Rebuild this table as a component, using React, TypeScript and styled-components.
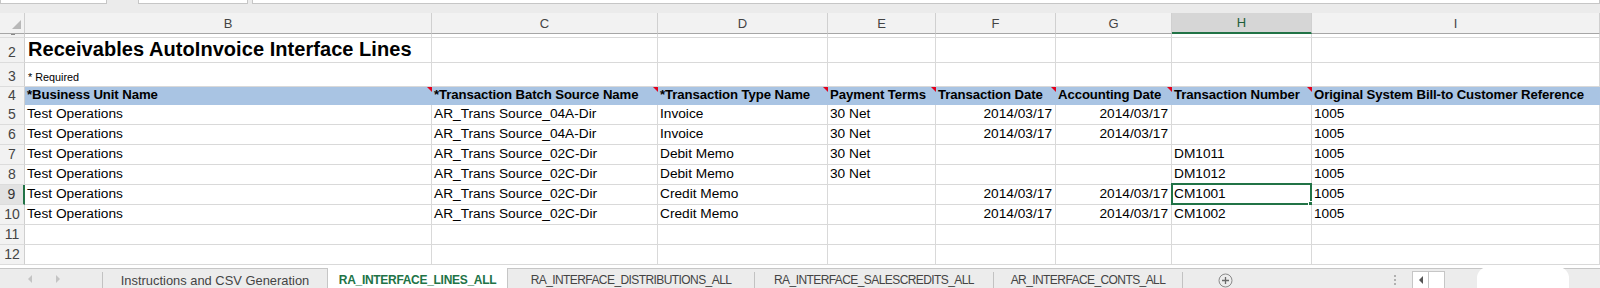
import styled, { createGlobalStyle } from "styled-components";

const GlobalStyle = createGlobalStyle`
  html, body {
    margin: 0;
    padding: 0;
    background: #ffffff;
  }
  body {
    width: 1600px;
    height: 288px;
    overflow: hidden;
    font-family: "Liberation Sans", Arial, sans-serif;
    color: #000;
  }
`;

const COLS = "25px 407px 226px 170px 108px 120px 116px 140px 288px";
const GREEN = "#217346";
const GRID = "#d9d9d9";
const FILL = "#a9c4e3";

const Page = styled.div`
  width: 1600px;
  height: 288px;
  display: flex;
  flex-direction: column;
  overflow: hidden;
`;

const TopStrip = styled.div`
  height: 13px;
  flex: none;
  display: flex;
  gap: 4px;
  background: #ebebeb;
  box-sizing: border-box;
`;

const TopBox = styled.div<{ $w?: number; $gapLeft?: number }>`
  height: 4px;
  background: #fff;
  border: 1px solid #c6c6c6;
  border-top: none;
  box-sizing: border-box;
  ${(p) => (p.$w ? `width: ${p.$w}px; flex: none;` : "flex: 1;")}
  margin-left: ${(p) => p.$gapLeft ?? 0}px;
`;

const Row = styled.div<{ $h: number }>`
  display: grid;
  grid-template-columns: ${COLS};
  height: ${(p) => p.$h}px;
  flex: none;
`;

const Corner = styled.div`
  background: #f2f2f2;
  border-right: 1px solid #cfcfcf;
  border-bottom: 1px solid #a6a6a6;
  box-sizing: border-box;
  display: flex;
  align-items: flex-end;
  justify-content: flex-end;
  padding: 0 3px 4px 0;

  &::before {
    content: "";
    width: 0;
    height: 0;
    border-left: 9px solid transparent;
    border-bottom: 9px solid #b8b8b8;
  }
`;

const ColHead = styled.div<{ $sel?: boolean }>`
  background: ${(p) => (p.$sel ? "#d6d6d6" : "#f2f2f2")};
  border-right: 1px solid #d0d0d0;
  border-bottom: ${(p) => (p.$sel ? `2px solid ${GREEN}` : "1px solid #a6a6a6")};
  box-sizing: border-box;
  display: flex;
  align-items: center;
  justify-content: center;
  font-size: 13px;
  color: ${(p) => (p.$sel ? "#1e5e3a" : "#444")};
`;

const RowHead = styled.div<{ $sel?: boolean; $stub?: boolean }>`
  background: ${(p) => (p.$sel ? "#e2e2e2" : "#f2f2f2")};
  border-right: ${(p) => (p.$sel ? `2px solid ${GREEN}` : "1px solid #cfcfcf")};
  border-bottom: 1px solid #dcdcdc;
  box-sizing: border-box;
  display: flex;
  align-items: flex-end;
  justify-content: center;
  padding-bottom: 2px;
  font-size: 14px;
  line-height: 16px;
  color: ${(p) => (p.$sel ? "#333" : "#444")};
  overflow: hidden;

  ${(p) =>
    p.$stub &&
    `
    align-items: flex-start;
    padding: 0 0 0 1px;
    &::before {
      content: "";
      width: 4px;
      height: 1px;
      background: #888;
    }
  `}
`;

type Align = "left" | "right";

const Cell = styled.div<{ $align?: Align; $fill?: boolean; $bold?: boolean; $note?: boolean; $size?: number }>`
  position: relative;
  box-sizing: border-box;
  border-right: 1px solid ${(p) => (p.$fill ? FILL : GRID)};
  border-bottom: 1px solid ${GRID};
  background: ${(p) => (p.$fill ? FILL : "#fff")};
  display: flex;
  align-items: flex-end;
  justify-content: ${(p) => (p.$align === "right" ? "flex-end" : "flex-start")};
  padding: 0 3px 2px 2px;
  white-space: nowrap;
  font-size: ${(p) => p.$size ?? 13.7}px;
  font-weight: ${(p) => (p.$bold ? 700 : 400)};
  line-height: 16px;
  letter-spacing: ${(p) => (p.$bold ? "-0.1px" : "0")};

  ${(p) =>
    p.$note &&
    `
    &::after {
      content: "";
      position: absolute;
      top: 0;
      right: -1px;
      width: 0;
      height: 0;
      border-left: 5px solid transparent;
      border-top: 5px solid #e3001b;
    }
  `}
`;

const Title = styled.span`
  font-size: 20px;
  font-weight: 700;
  line-height: 22px;
  padding-left: 1px;
  letter-spacing: 0.05px;
`;

const Hint = styled.span`
  font-size: 10.8px;
  line-height: 12px;
  padding-left: 1px;
  padding-bottom: 1px;
`;

const CursorBox = styled.span`
  position: absolute;
  left: -1px;
  top: -2px;
  right: -1px;
  bottom: -1px;
  border: 2px solid ${GREEN};
  pointer-events: none;

  &::after {
    content: "";
    position: absolute;
    right: -5px;
    bottom: -5px;
    width: 5px;
    height: 5px;
    background: ${GREEN};
    border: 1px solid #fff;
  }
`;

const TabBar = styled.div`
  height: 20px;
  flex: none;
  display: flex;
  align-items: stretch;
  background: #ececec;
  border-top: 1px solid #c6c6c6;
  box-sizing: border-box;
  margin-top: 3px;
`;

const Nav = styled.div`
  width: 102px;
  flex: none;
  display: flex;
  align-items: center;
  padding-left: 28px;
  gap: 24px;
  box-sizing: border-box;
`;

const Arrow = styled.span<{ $dir: "left" | "right"; $dark?: boolean }>`
  width: 0;
  height: 0;
  border-top: 4px solid transparent;
  border-bottom: 4px solid transparent;
  ${(p) =>
    p.$dir === "left"
      ? `border-right: 4px solid ${p.$dark ? "#555" : "#c4c4c4"};`
      : `border-left: 4px solid ${p.$dark ? "#555" : "#c4c4c4"};`}
`;

const Sep = styled.span`
  width: 1px;
  height: 16px;
  align-self: flex-end;
  background: #c2c2c2;
  flex: none;
`;

const Tab = styled.div<{ $w: number; $active?: boolean; $caps?: boolean }>`
  width: ${(p) => p.$w}px;
  flex: none;
  display: flex;
  align-items: center;
  justify-content: center;
  padding-top: 3px;
  box-sizing: border-box;
  white-space: nowrap;
  font-size: ${(p) => (p.$caps ? 12 : 12.9)}px;
  letter-spacing: ${(p) => (p.$caps ? (p.$active ? -0.3 : -0.58) : 0)}px;
  font-weight: ${(p) => (p.$active ? 700 : 400)};
  color: ${(p) => (p.$active ? GREEN : "#444")};
  background: ${(p) => (p.$active ? "#fff" : "transparent")};
  ${(p) =>
    p.$active &&
    `
    margin-top: -1px;
    border-left: 1px solid #c6c6c6;
    border-right: 1px solid #c6c6c6;
  `}
`;

const AddSheet = styled.div`
  margin-left: 35px;
  display: flex;
  align-items: center;
  padding-top: 3px;
`;

const Dots = styled.div`
  margin-left: 161px;
  display: flex;
  flex-direction: column;
  justify-content: center;
  gap: 2px;
  padding-top: 3px;

  span {
    width: 2px;
    height: 2px;
    background: #b0b0b0;
  }
`;

const ScrollArrow = styled.div`
  margin-left: 16px;
  margin-top: 2px;
  width: 17px;
  background: #fff;
  border: 1px solid #c6c6c6;
  border-bottom: none;
  box-sizing: border-box;
  display: flex;
  align-items: center;
  justify-content: center;
`;

const ScrollThumb = styled.div`
  margin-top: 2px;
  width: 16px;
  background: #fff;
  border-top: 1px solid #c6c6c6;
  border-right: 1px solid #c6c6c6;
  box-sizing: border-box;
`;

const Blob = styled.div`
  margin-left: 32px;
  margin-top: -2px;
  width: 92px;
  background: #fff;
  border-radius: 11px 11px 0 0;
`;

type Line = [string, string, string, string, string, string, string, string];

const lines: Line[] = [
  ["Test Operations", "AR_Trans Source_04A-Dir", "Invoice", "30 Net", "2014/03/17", "2014/03/17", "", "1005"],
  ["Test Operations", "AR_Trans Source_04A-Dir", "Invoice", "30 Net", "2014/03/17", "2014/03/17", "", "1005"],
  ["Test Operations", "AR_Trans Source_02C-Dir", "Debit Memo", "30 Net", "", "", "DM1011", "1005"],
  ["Test Operations", "AR_Trans Source_02C-Dir", "Debit Memo", "30 Net", "", "", "DM1012", "1005"],
  ["Test Operations", "AR_Trans Source_02C-Dir", "Credit Memo", "", "2014/03/17", "2014/03/17", "CM1001", "1005"],
  ["Test Operations", "AR_Trans Source_02C-Dir", "Credit Memo", "", "2014/03/17", "2014/03/17", "CM1002", "1005"],
];

const headers = [
  "*Business Unit Name",
  "*Transaction Batch Source Name",
  "*Transaction Type Name",
  "Payment Terms",
  "Transaction Date",
  "Accounting Date",
  "Transaction Number",
  "Original System Bill-to Customer Reference",
];

const letters = ["B", "C", "D", "E", "F", "G", "H", "I"];
const rightCols = [4, 5];

const emptyCells = () => letters.map((l) => <Cell key={l} />);

const PlusIcon = () => (
  <svg width="15" height="15" viewBox="0 0 15 15">
    <circle cx="7.5" cy="7.5" r="6.5" fill="none" stroke="#8a8a8a" strokeWidth="1" />
    <path d="M7.5 4v7M4 7.5h7" stroke="#6a6a6a" strokeWidth="1.3" />
  </svg>
);

export default function App() {
  return (
    <>
      <GlobalStyle />
      <Page>
        <TopStrip>
          <TopBox $w={107} />
          <TopBox $w={110} $gapLeft={27} />
          <TopBox />
        </TopStrip>

        <Row $h={21}>
          <Corner />
          {letters.map((l) => (
            <ColHead key={l} $sel={l === "H"}>
              {l}
            </ColHead>
          ))}
        </Row>

        <Row $h={4}>
          <RowHead $stub />
          {emptyCells()}
        </Row>

        <Row $h={25}>
          <RowHead>2</RowHead>
          <Cell>
            <Title>Receivables AutoInvoice Interface Lines</Title>
          </Cell>
          {letters.slice(1).map((l) => (
            <Cell key={l} />
          ))}
        </Row>

        <Row $h={24}>
          <RowHead>3</RowHead>
          <Cell>
            <Hint>* Required</Hint>
          </Cell>
          {letters.slice(1).map((l) => (
            <Cell key={l} />
          ))}
        </Row>

        <Row $h={18}>
          <RowHead>4</RowHead>
          {headers.map((h, i) => (
            <Cell key={h} $fill $bold $size={13.2} $note={i < 7}>
              {h}
            </Cell>
          ))}
        </Row>

        {lines.map((line, r) => (
          <Row $h={20} key={r}>
            <RowHead $sel={r + 5 === 9}>{r + 5}</RowHead>
            {line.map((v, c) => (
              <Cell key={c} $align={rightCols.includes(c) ? "right" : "left"}>
                {v}
                {r + 5 === 9 && c === 6 && <CursorBox />}
              </Cell>
            ))}
          </Row>
        ))}

        {[11, 12].map((n) => (
          <Row $h={20} key={n}>
            <RowHead>{n}</RowHead>
            {emptyCells()}
          </Row>
        ))}

        <TabBar>
          <Nav>
            <Arrow $dir="left" />
            <Arrow $dir="right" />
          </Nav>
          <Sep />
          <Tab $w={224}>Instructions and CSV Generation</Tab>
          <Tab $w={181} $active $caps>
            RA_INTERFACE_LINES_ALL
          </Tab>
          <Tab $w={246} $caps>
            RA_INTERFACE_DISTRIBUTIONS_ALL
          </Tab>
          <Sep />
          <Tab $w={238} $caps>
            RA_INTERFACE_SALESCREDITS_ALL
          </Tab>
          <Sep />
          <Tab $w={188} $caps>
            AR_INTERFACE_CONTS_ALL
          </Tab>
          <Sep />
          <AddSheet>
            <PlusIcon />
          </AddSheet>
          <Dots>
            <span />
            <span />
            <span />
          </Dots>
          <ScrollArrow>
            <Arrow $dir="left" $dark />
          </ScrollArrow>
          <ScrollThumb />
          <Blob />
        </TabBar>
      </Page>
    </>
  );
}
